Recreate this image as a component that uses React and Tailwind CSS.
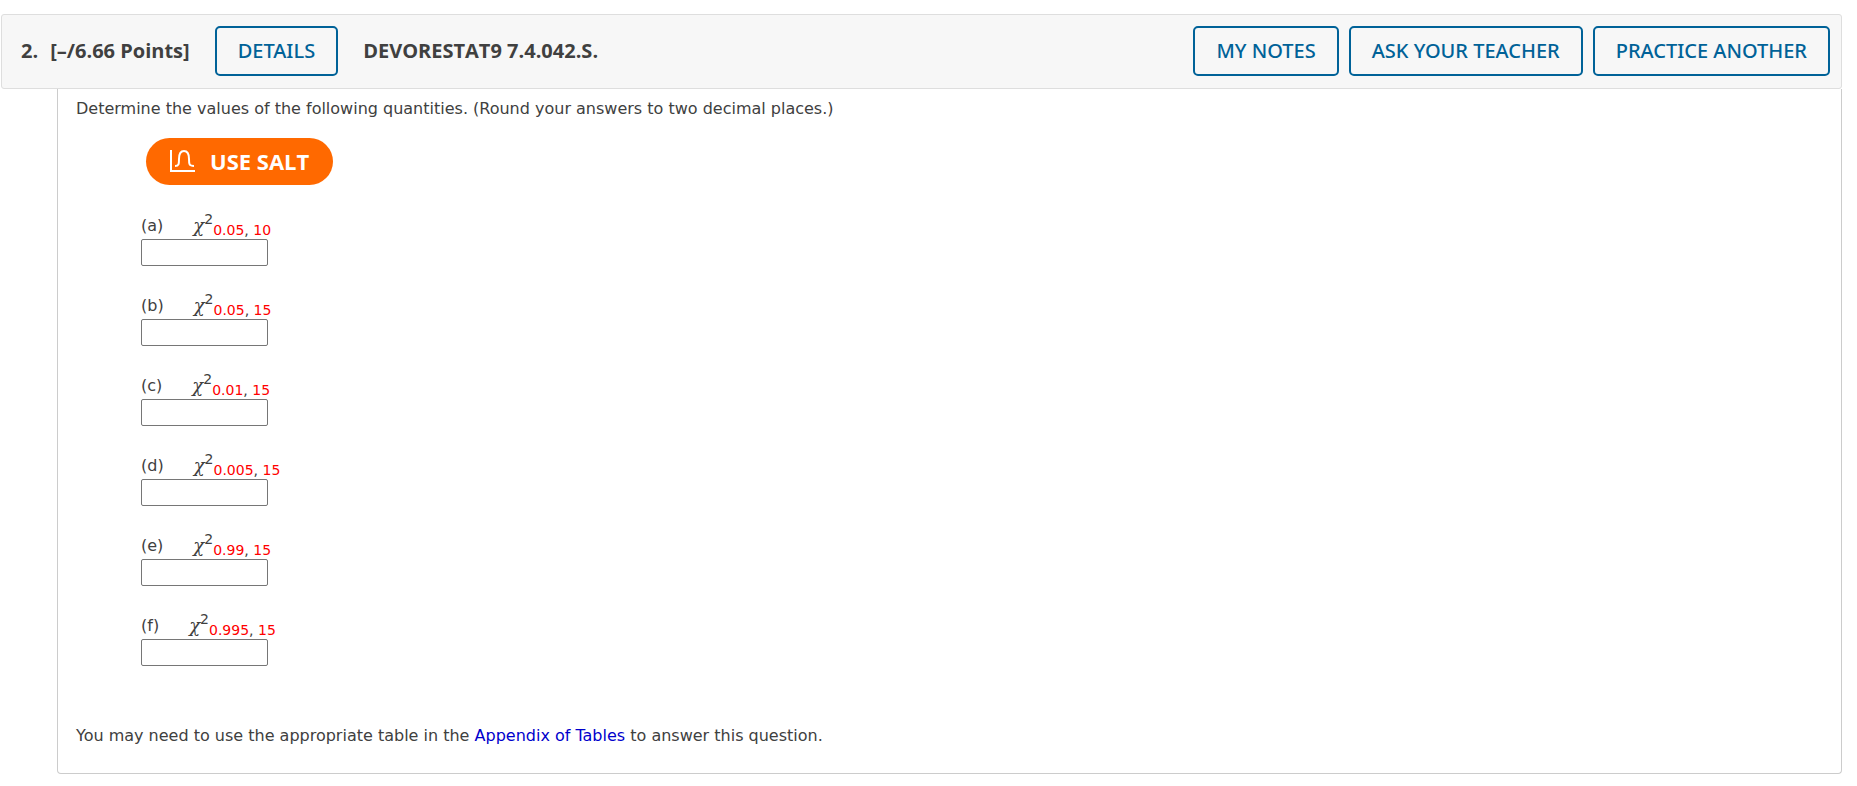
const parts = [
  { id: "a", alpha: "0.05", df: "10" },
  { id: "b", alpha: "0.05", df: "15" },
  { id: "c", alpha: "0.01", df: "15" },
  { id: "d", alpha: "0.005", df: "15" },
  { id: "e", alpha: "0.99", df: "15" },
  { id: "f", alpha: "0.995", df: "15" },
];

function HeaderButton({ children }) {
  return (
    <button
      type="button"
      className="h-[50px] px-[21px] border-2 border-[#006298] rounded-[5px] bg-[#f7f7f7] text-[#006298] text-[20px] font-medium font-['Noto_Sans',sans-serif] whitespace-nowrap cursor-pointer"
    >
      {children}
    </button>
  );
}

function QuestionHeader() {
  return (
    <header className="flex items-center justify-between h-[75px] pl-[19px] pr-[11px] pb-px bg-[#f7f7f7] border border-[#dedede] rounded-[3px] font-['Open_Sans',sans-serif]">
      <div className="flex items-center text-[20px] font-bold text-[#404040] whitespace-nowrap">
        <span>2.</span>
        <span className="ml-3 mr-[25px]">[–/6.66 Points]</span>
        <HeaderButton>DETAILS</HeaderButton>
        <h1 className="ml-[25px]">DEVORESTAT9 7.4.042.S.</h1>
      </div>
      <div className="flex items-center gap-[10px]">
        <HeaderButton>MY NOTES</HeaderButton>
        <HeaderButton>ASK YOUR TEACHER</HeaderButton>
        <HeaderButton>PRACTICE ANOTHER</HeaderButton>
      </div>
    </header>
  );
}

function SaltButton() {
  return (
    <button
      type="button"
      className="flex items-center h-[47px] ml-[70px] pl-[23px] pr-6 pb-px rounded-full bg-[#ff6900] text-white text-[22px] font-bold font-['Open_Sans',sans-serif] cursor-pointer"
    >
      <svg className="w-[26px] h-6 mr-[15px]" viewBox="0 0 26 24" fill="none" stroke="currentColor" strokeWidth="2">
        <path d="M2 1v21h24" />
        <path d="M6 17c4 0 4-2 4-7 0-5 1-8 5-8s5 3 5 8 0 7 5 7" />
      </svg>
      USE SALT
    </button>
  );
}

function Part({ id, alpha, df }) {
  return (
    <div>
      <label htmlFor={`answer-${id}`} className="flex items-center h-[26px] whitespace-nowrap">
        <span className="mr-[30px]">({id})</span>
        <i className="text-[18px] font-['DejaVu_Serif',serif]">χ</i>
        <sup className="text-[14px]">2</sup>
        <sub className="text-[14px]">
          <span className="text-[#ff0000]">{alpha}</span>, <span className="text-[#ff0000]">{df}</span>
        </sub>
      </label>
      <input
        id={`answer-${id}`}
        type="text"
        className="block w-[127px] h-[27px] px-1 border border-[#767676] rounded-[2px] bg-white"
      />
    </div>
  );
}

function App() {
  return (
    <div className="pt-[14px] pl-px pr-[15px] pb-3 bg-white">
      <QuestionHeader />
      <main className="ml-14 px-[18px] pt-2 pb-[25px] border border-t-0 border-[#cccccc] rounded-b-[4px] text-[16px] leading-6 text-[#404040] font-['DejaVu_Sans',sans-serif]">
        <p className="mb-[17px]">
          Determine the values of the following quantities. (Round your answers to two decimal places.)
        </p>
        <SaltButton />
        <div className="flex flex-col gap-[27px] ml-[65px] mt-[28px]">
          {parts.map((part) => (
            <Part key={part.id} {...part} />
          ))}
        </div>
        <p className="mt-[58px]">
          You may need to use the appropriate table in the{" "}
          <a href="#appendix" className="text-[#0000cc]">Appendix of Tables</a> to answer this question.
        </p>
      </main>
    </div>
  );
}

export default App;
